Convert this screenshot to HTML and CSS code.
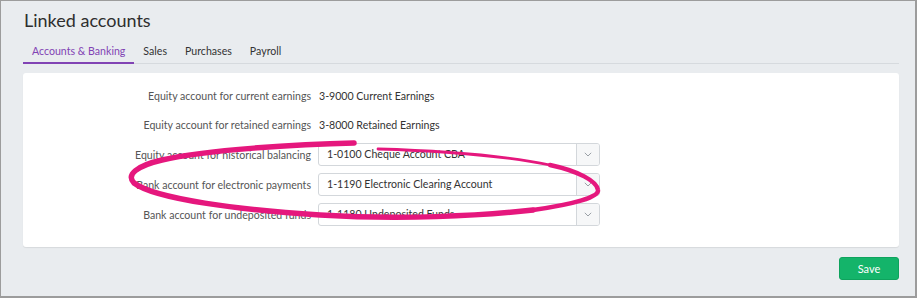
FILE: index.html
```html
<!DOCTYPE html>
<html lang="en">
<head>
<meta charset="utf-8">
<title>Linked accounts</title>
<link rel="stylesheet" href="styles.css">
</head>
<body>
<div class="frame">
  <h1 class="title">Linked accounts</h1>
  <nav class="tabs">
    <span class="tab tab-active">Accounts &amp; Banking</span>
    <span class="tab">Sales</span>
    <span class="tab">Purchases</span>
    <span class="tab">Payroll</span>
  </nav>
  <section class="card">
    <div class="row row-text">
      <span class="label">Equity account for current earnings</span>
      <span class="value">3-9000 Current Earnings</span>
    </div>
    <div class="row row-text">
      <span class="label">Equity account for retained earnings</span>
      <span class="value">3-8000 Retained Earnings</span>
    </div>
    <div class="row">
      <span class="label">Equity account for historical balancing</span>
      <div class="select">
        <span class="select-text">1-0100 Cheque Account CBA</span>
        <span class="select-btn"><svg class="chev" viewBox="0 0 8 5" width="8" height="5"><path d="M0.8 0.8 L4 4 L7.2 0.8" fill="none" stroke="#9aa0a6" stroke-width="1"/></svg></span>
      </div>
    </div>
    <div class="row">
      <span class="label">Bank account for electronic payments</span>
      <div class="select">
        <span class="select-text">1-1190 Electronic Clearing Account</span>
        <span class="select-btn"><svg class="chev" viewBox="0 0 8 5" width="8" height="5"><path d="M0.8 0.8 L4 4 L7.2 0.8" fill="none" stroke="#9aa0a6" stroke-width="1"/></svg></span>
      </div>
    </div>
    <div class="row">
      <span class="label">Bank account for undeposited funds</span>
      <div class="select">
        <span class="select-text">1-1180 Undeposited Funds</span>
        <span class="select-btn"><svg class="chev" viewBox="0 0 8 5" width="8" height="5"><path d="M0.8 0.8 L4 4 L7.2 0.8" fill="none" stroke="#9aa0a6" stroke-width="1"/></svg></span>
      </div>
    </div>
  </section>
  <div class="actions">
    <button class="save" type="button">Save</button>
  </div>
</div>
<svg class="annotation" width="917" height="298" viewBox="0 0 917 298">
  <g fill="none" stroke="#e5177d" stroke-linecap="round" stroke-linejoin="round">
    <path stroke-width="5.5" d="M354,143 C300,144 205,150 162,160 C136,166 126,175 134,183 C155,199 240,210 320,215 C400,220 480,216 533,210"/>
    <path stroke-width="4.5" d="M533,210 C575,204 599,197 598,190 C597,181 578,171 550,165"/>
    <path stroke-width="2.8" d="M550,165 C510,157 450,151 378,149"/>
  </g>
</svg>
</body>
</html>
```

FILE: styles.css
```css
* { box-sizing: border-box; }

html, body {
  margin: 0;
  padding: 0;
}

body {
  position: relative;
  width: 917px;
  height: 298px;
  overflow: hidden;
  font-family: Lato, "Open Sans", sans-serif;
  font-size: 10.6px;
  color: #333;
  background: #fff;
}

.frame {
  width: 917px;
  height: 298px;
  background: #e9ecef;
  border: 1px solid #9c9c9c;
  border-right-width: 2px;
  border-bottom-width: 2px;
  padding: 0 16px 0 22px;
}

.title {
  margin: 7px 0 0 1px;
  font-size: 18px;
  font-weight: 400;
  line-height: 24px;
  color: #2e2e2e;
}

.tabs {
  display: flex;
  border-bottom: 1px solid #d6dade;
}

.tab {
  padding: 12px 9px 4px;
  line-height: 14px;
  margin-bottom: -1px;
  border-bottom: 2px solid transparent;
  color: #333;
}

.tab-active {
  color: #8143b4;
  border-bottom-color: #8143b4;
}

.card {
  margin-top: 9px;
  background: #fff;
  border-radius: 3px;
  box-shadow: 0 1px 1px rgba(0, 0, 0, 0.08);
  padding: 12px 0 21px;
  display: flex;
  flex-direction: column;
  gap: 7px;
}

.row {
  display: grid;
  grid-template-columns: 288px 282px;
  column-gap: 7px;
  align-items: center;
  height: 23px;
}

.row-text {
  height: 22px;
}

.label {
  text-align: right;
  color: #555;
}

.value {
  padding-left: 1px;
  color: #333;
}

.select {
  display: flex;
  height: 23px;
  border: 1px solid #d3d7db;
  border-radius: 3px;
  background: #fff;
}

.select-text {
  flex: 1;
  padding-left: 8px;
  line-height: 21px;
  color: #333;
}

.select-btn {
  width: 23px;
  display: flex;
  align-items: center;
  justify-content: center;
  border-left: 1px solid #d3d7db;
  background: #f6f7f8;
  border-radius: 0 2px 2px 0;
}

.actions {
  display: flex;
  justify-content: flex-end;
  margin-top: 10px;
}

.save {
  width: 60px;
  height: 23px;
  padding: 0;
  font-family: Lato, "Open Sans", sans-serif;
  font-size: 11px;
  color: #fff;
  background: #14b46a;
  border: 1px solid #0ea35d;
  border-radius: 3px;
}

.annotation {
  position: absolute;
  left: 0;
  top: 0;
  pointer-events: none;
}
```
